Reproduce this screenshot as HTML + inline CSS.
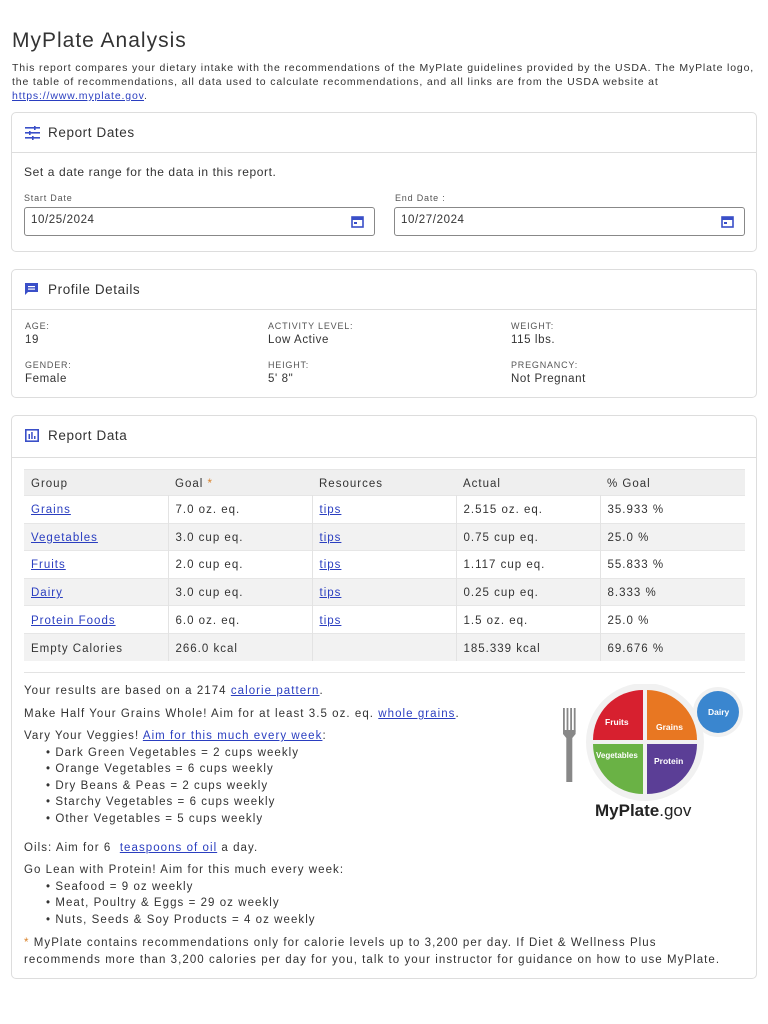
<!DOCTYPE html>
<html><head><meta charset="utf-8"><style>
*{box-sizing:border-box;margin:0;padding:0}
body{width:768px;height:1024px;background:#fff;font-family:"Liberation Sans",sans-serif;color:#333;position:relative;overflow:hidden;letter-spacing:.6px}
.a{position:absolute;white-space:nowrap}
h1{position:absolute;left:12px;top:29px;font-size:21px;font-weight:normal;color:#333;letter-spacing:1px}
a{color:#2a3ec0;text-decoration:underline}
.intro{position:absolute;left:12px;top:61px;font-size:10.5px;line-height:14px;width:760px;letter-spacing:.85px;white-space:nowrap}
.card{position:absolute;left:11px;width:746px;border:1px solid #ddd;border-radius:5px}
.hd{height:40px;border-bottom:1px solid #ddd;font-size:13.5px;padding:12px 0 0 36px;position:relative}
.hd svg{position:absolute;left:13px;top:13px}
.sm{font-size:9px;color:#555;letter-spacing:.8px}
.v{font-size:11.5px}
.inp{position:absolute;top:207px;height:29px;border:1px solid #888;border-radius:3px;font-size:11.5px;padding:6px 0 0 6px}
table{position:absolute;left:24px;top:469px;width:721px;border-collapse:collapse;font-size:11.5px;letter-spacing:1px}
td{height:27.6px;padding-left:7px;padding-top:2px;border-right:1px solid #e3e3e3;border-top:1px solid #e6e6e6}
td:last-child{border-right:none}
tr.g td{background:#f2f2f2}
tr.h td{background:#efefef;height:26px;border-right:none}
.t{font-size:11.5px;position:absolute;left:24px;white-space:nowrap;letter-spacing:1.05px}
</style></head><body>
<h1>MyPlate Analysis</h1>
<div class="intro">This report compares your dietary intake with the recommendations of the MyPlate guidelines provided by the USDA. The MyPlate logo,<br>the table of recommendations, all data used to calculate recommendations, and all links are from the USDA website at<br><a>https://www.myplate.gov</a>.</div>

<div class="card" style="top:112px;height:140px">
<div class="hd"><svg width="15" height="14" viewBox="0 0 15 14" fill="#3a4fc8"><rect x="0" y="1" width="15" height="1.6"/><rect x="0" y="6" width="15" height="1.6"/><rect x="0" y="11" width="15" height="1.6"/><rect x="9" y="0" width="1.6" height="4"/><rect x="4" y="5" width="1.6" height="4"/><rect x="7" y="10" width="1.6" height="4"/></svg>Report Dates</div>
</div>
<div class="a" style="left:24px;top:165px;font-size:12px">Set a date range for the data in this report.</div>
<div class="a sm" style="left:24px;top:193px">Start Date</div>
<div class="a sm" style="left:395px;top:193px">End Date :</div>
<div class="inp" style="left:24px;width:351px">10/25/2024</div>
<div class="inp" style="left:394px;width:351px">10/27/2024</div>
<svg class="a" style="left:351px;top:215px" width="13" height="13" viewBox="0 0 13 13"><rect x="1" y="2" width="11" height="10" fill="none" stroke="#3a4fc8" stroke-width="1.6"/><rect x="1" y="2" width="11" height="3" fill="#3a4fc8"/><rect x="3" y="7" width="3" height="2" fill="#3a4fc8"/></svg>
<svg class="a" style="left:721px;top:215px" width="13" height="13" viewBox="0 0 13 13"><rect x="1" y="2" width="11" height="10" fill="none" stroke="#3a4fc8" stroke-width="1.6"/><rect x="1" y="2" width="11" height="3" fill="#3a4fc8"/><rect x="3" y="7" width="3" height="2" fill="#3a4fc8"/></svg>

<div class="card" style="top:269px;height:129px">
<div class="hd"><svg width="13" height="12" viewBox="0 0 13 12" fill="#3a4fc8"><path d="M0 0h13v9H3l-3 3z"/><rect x="3" y="3" width="7" height="1.2" fill="#fff"/><rect x="3" y="5.5" width="7" height="1.2" fill="#fff"/></svg>Profile Details</div>
</div>
<div class="a sm" style="left:25px;top:321px">AGE:</div><div class="a v" style="left:25px;top:334px">19</div>
<div class="a sm" style="left:268px;top:321px">ACTIVITY LEVEL:</div><div class="a v" style="left:268px;top:334px">Low Active</div>
<div class="a sm" style="left:511px;top:321px">WEIGHT:</div><div class="a v" style="left:511px;top:334px">115 lbs.</div>
<div class="a sm" style="left:25px;top:360px">GENDER:</div><div class="a v" style="left:25px;top:373px">Female</div>
<div class="a sm" style="left:268px;top:360px">HEIGHT:</div><div class="a v" style="left:268px;top:373px">5' 8"</div>
<div class="a sm" style="left:511px;top:360px">PREGNANCY:</div><div class="a v" style="left:511px;top:373px">Not Pregnant</div>

<div class="card" style="top:415px;height:564px">
<div class="hd" style="height:42px"><svg width="14" height="13" viewBox="0 0 14 13"><rect x="0.8" y="0.8" width="12.4" height="11.4" fill="none" stroke="#3a4fc8" stroke-width="1.6"/><rect x="3.5" y="5" width="1.5" height="5" fill="#3a4fc8"/><rect x="6.2" y="3" width="1.5" height="7" fill="#3a4fc8"/><rect x="9" y="7" width="1.5" height="3" fill="#3a4fc8"/></svg>Report Data</div>
</div>
<table>
<tr class="h"><td style="width:144px">Group</td><td style="width:144px">Goal <span style="color:#d9822b">*</span></td><td style="width:144px">Resources</td><td style="width:144px">Actual</td><td>% Goal</td></tr>
<tr><td><a>Grains</a></td><td>7.0 oz. eq.</td><td><a>tips</a></td><td>2.515 oz. eq.</td><td>35.933 %</td></tr>
<tr class="g"><td><a>Vegetables</a></td><td>3.0 cup eq.</td><td><a>tips</a></td><td>0.75 cup eq.</td><td>25.0 %</td></tr>
<tr><td><a>Fruits</a></td><td>2.0 cup eq.</td><td><a>tips</a></td><td>1.117 cup eq.</td><td>55.833 %</td></tr>
<tr class="g"><td><a>Dairy</a></td><td>3.0 cup eq.</td><td><a>tips</a></td><td>0.25 cup eq.</td><td>8.333 %</td></tr>
<tr><td><a>Protein Foods</a></td><td>6.0 oz. eq.</td><td><a>tips</a></td><td>1.5 oz. eq.</td><td>25.0 %</td></tr>
<tr class="g"><td>Empty Calories</td><td>266.0 kcal</td><td></td><td>185.339 kcal</td><td>69.676 %</td></tr>
</table>
<div class="a" style="left:24px;top:672px;width:721px;border-top:1px solid #e3e3e3"></div>

<div class="t" style="top:685px">Your results are based on a 2174 <a>calorie pattern</a>.</div>
<div class="t" style="top:708px">Make Half Your Grains Whole! Aim for at least 3.5 oz. eq. <a>whole grains</a>.</div>
<div class="t" style="top:730px">Vary Your Veggies! <a>Aim for this much every week</a>:</div>
<div class="t" style="top:747px;left:46px">• Dark Green Vegetables = 2 cups weekly</div>
<div class="t" style="top:763px;left:46px">• Orange Vegetables = 6 cups weekly</div>
<div class="t" style="top:780px;left:46px">• Dry Beans &amp; Peas = 2 cups weekly</div>
<div class="t" style="top:796px;left:46px">• Starchy Vegetables = 6 cups weekly</div>
<div class="t" style="top:813px;left:46px">• Other Vegetables = 5 cups weekly</div>
<div class="t" style="top:842px">Oils: Aim for 6 &nbsp;<a>teaspoons of oil</a> a day.</div>
<div class="t" style="top:864px">Go Lean with Protein! Aim for this much every week:</div>
<div class="t" style="top:881px;left:46px">• Seafood = 9 oz weekly</div>
<div class="t" style="top:897px;left:46px">• Meat, Poultry &amp; Eggs = 29 oz weekly</div>
<div class="t" style="top:914px;left:46px">• Nuts, Seeds &amp; Soy Products = 4 oz weekly</div>
<div class="t" style="top:935px;line-height:17px"><span style="color:#d9822b">*</span> MyPlate contains recommendations only for calorie levels up to 3,200 per day. If Diet &amp; Wellness Plus<br>recommends more than 3,200 calories per day for you, talk to your instructor for guidance on how to use MyPlate.</div>

<svg class="a" style="left:555px;top:684px;letter-spacing:0" width="205" height="140" viewBox="0 0 205 140">
<circle cx="90" cy="58" r="59" fill="#f1f1f1"/>
<path d="M88 56V6A50 50 0 0 0 38 56z" fill="#d7202f"/>
<path d="M92 56V6A50 50 0 0 1 142 56z" fill="#e87722"/>
<path d="M88 60H38A50 50 0 0 0 88 110z" fill="#6ab245"/>
<path d="M92 60H142A50 50 0 0 1 92 110z" fill="#5b3e96"/>
<circle cx="163" cy="28" r="25" fill="#f1f1f1"/>
<circle cx="163" cy="28" r="21" fill="#3a86cf"/>
<g font-family="Liberation Sans" font-weight="bold" font-size="8.5" fill="#fff">
<text x="50" y="41">Fruits</text><text x="101" y="46">Grains</text><text x="41" y="74" font-size="8">Vegetables</text><text x="99" y="80">Protein</text><text x="153" y="31">Dairy</text></g>
<g fill="#888"><rect x="8" y="24" width="1.8" height="24"/><rect x="11.6" y="24" width="1.8" height="24"/><rect x="15.2" y="24" width="1.8" height="24"/><rect x="18.8" y="24" width="1.8" height="24"/><path d="M8 46h12.6v4l-3.3 4v44h-6V54l-3.3-4z"/></g>
<text x="40" y="132" font-family="Liberation Sans" font-size="17" fill="#222"><tspan font-weight="bold">MyPlate</tspan>.gov</text>
</svg>
</body></html>
